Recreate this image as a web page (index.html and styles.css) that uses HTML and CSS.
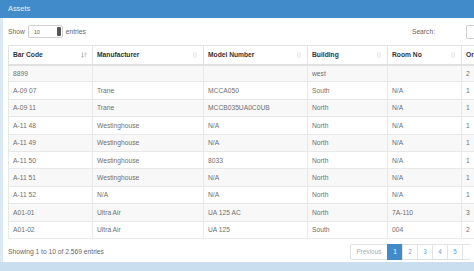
FILE: index.html
```html
<!DOCTYPE html>
<html lang="en">
<head>
    <meta charset="UTF-8">
    <title>Assets</title>
    <link rel="stylesheet" href="styles.css">
</head>
<body>

    <div class="panel">
        <div class="panel-heading">Assets</div>

        <div class="panel-body">
            <!-- length + search controls -->
            <div class="table-controls">
                <label class="length">
                    Show
                    <span class="select">
                        <span class="select-value">10</span>
                        <span class="select-arrow"></span>
                    </span>
                    entries
                </label>
                <label class="search">
                    Search:
                    <span class="search-input"></span>
                </label>
            </div>

            <table class="data-table">
                <colgroup>
                    <col style="width: 84px">
                    <col style="width: 111px">
                    <col style="width: 104px">
                    <col style="width: 80px">
                    <col style="width: 74px">
                    <col style="width: 70px">
                </colgroup>
                <thead>
                    <tr>
                        <th class="sorted">Bar Code
                            <svg class="sort-icon" viewBox="0 0 8 8"><path d="M2 0.5v6.5M0.6 5.4L2 7l1.4-1.6" /><path d="M4.6 1.5h3M4.6 3.5h2.4M4.6 5.5h1.8" /></svg>
                        </th>
                        <th>Manufacturer <svg class="sort-icon" viewBox="0 0 8 8"><path d="M2.5 0.5v7M5.5 0.5v7" /></svg></th>
                        <th>Model Number <svg class="sort-icon" viewBox="0 0 8 8"><path d="M2.5 0.5v7M5.5 0.5v7" /></svg></th>
                        <th>Building <svg class="sort-icon" viewBox="0 0 8 8"><path d="M2.5 0.5v7M5.5 0.5v7" /></svg></th>
                        <th>Room No <svg class="sort-icon" viewBox="0 0 8 8"><path d="M2.5 0.5v7M5.5 0.5v7" /></svg></th>
                        <th>Or</th>
                    </tr>
                </thead>
                <tbody>
                    <tr><td>8899</td><td></td><td></td><td>west</td><td></td><td>2</td></tr>
                    <tr><td>A-09 07</td><td>Trane</td><td>MCCA050</td><td>South</td><td>N/A</td><td>1</td></tr>
                    <tr><td>A-09 11</td><td>Trane</td><td>MCCB035UA0C0UB</td><td>North</td><td>N/A</td><td>1</td></tr>
                    <tr><td>A-11 48</td><td>Westinghouse</td><td>N/A</td><td>North</td><td>N/A</td><td>1</td></tr>
                    <tr><td>A-11 49</td><td>Westinghouse</td><td>N/A</td><td>North</td><td>N/A</td><td>1</td></tr>
                    <tr><td>A-11 50</td><td>Westinghouse</td><td>8033</td><td>North</td><td>N/A</td><td>1</td></tr>
                    <tr><td>A-11 51</td><td>Westinghouse</td><td>N/A</td><td>North</td><td>N/A</td><td>1</td></tr>
                    <tr><td>A-11 52</td><td>N/A</td><td>N/A</td><td>North</td><td>N/A</td><td>1</td></tr>
                    <tr><td>A01-01</td><td>Ultra Air</td><td>UA 125 AC</td><td>North</td><td>7A-110</td><td>3</td></tr>
                    <tr><td>A01-02</td><td>Ultra Air</td><td>UA 125</td><td>South</td><td>004</td><td>2</td></tr>
                </tbody>
            </table>

            <div class="table-footer">
                <div class="info">Showing 1 to 10 of 2,569 entries</div>
                <ul class="pagination">
                    <li class="disabled">Previous</li>
                    <li class="active">1</li>
                    <li>2</li>
                    <li>3</li>
                    <li>4</li>
                    <li>5</li>
                    <li class="gap"></li>
                </ul>
            </div>
        </div>
    </div>

</body>
</html>
```

FILE: styles.css
```css
* {
    margin: 0;
    padding: 0;
    box-sizing: border-box;
}

html, body {
    overflow: hidden;
}

body {
    width: 474px;
    height: 271px;
    background-color: #c9dfef;
    font-family: "Liberation Sans", Arial, sans-serif;
    font-size: 6.7px;
    color: #6f6f6f;
}

.panel {
    width: 600px;
    background-color: #fff;
}

.panel-heading {
    height: 18px;
    line-height: 18px;
    padding-left: 8px;
    background-color: #428bca;
    color: #e8f1fa;
    font-size: 7.4px;
}

.panel-body {
    height: 244px;
    border-left: 3px solid #dbe9f5;
    padding: 0 0 0 5px;
}

/* controls row */
.table-controls {
    display: flex;
    align-items: center;
    height: 26px;
    padding-top: 1px;
    width: 478px;
    justify-content: space-between;
}

.length, .search {
    display: flex;
    align-items: center;
    color: #666;
}

.select {
    display: flex;
    align-items: center;
    justify-content: space-between;
    width: 35px;
    height: 13px;
    margin: 0 3px 0 3px;
    border: 1px solid #cfcfcf;
    border-radius: 2px;
    padding-left: 5px;
    font-size: 5.6px;
}

.select-arrow {
    width: 4px;
    height: 9px;
    margin-right: 1px;
    background-color: #555;
    border-radius: 1px;
}

.search-input {
    display: block;
    width: 20px;
    height: 14px;
    margin-left: 31px;
    border: 1px solid #cfcfcf;
    border-radius: 2px 0 0 2px;
}

/* table */
.data-table {
    table-layout: fixed;
    border-collapse: collapse;
    width: 523px;
    margin-top: 1px;
    border: 1px solid #e3e3e3;
}

.data-table th {
    height: 19px;
    padding: 0 4px;
    text-align: left;
    font-weight: bold;
    color: #333;
    border: 1px solid #e3e3e3;
    border-bottom: 2px solid #e0e0e0;
    position: relative;
    white-space: nowrap;
}

.sort-icon {
    position: absolute;
    right: 5px;
    top: 6px;
    width: 6px;
    height: 6px;
    fill: none;
    stroke: #d6d6d6;
    stroke-width: 1;
}

.sorted .sort-icon {
    stroke: #a9a9a9;
}

.data-table td {
    height: 17.4px;
    padding: 0 4px;
    border: 1px solid #e8e8e8;
    white-space: nowrap;
    overflow: hidden;
}

.data-table tbody tr:nth-child(odd) {
    background-color: #f8f8f8;
}

/* footer */
.table-footer {
    display: flex;
    align-items: center;
    justify-content: space-between;
    width: 462px;
    height: 23px;
    padding-top: 3px;
}

.info {
    color: #666;
}

.pagination {
    display: flex;
    list-style: none;
}

.pagination li {
    height: 16px;
    min-width: 16px;
    line-height: 14px;
    text-align: center;
    border: 1px solid #e2e2e2;
    margin-left: -1px;
    color: #6aa3d6;
    font-size: 6.4px;
}

.pagination li.disabled {
    width: 38px;
    color: #aaa;
    border-radius: 2px 0 0 2px;
}

.pagination li.active {
    background-color: #428bca;
    border-color: #428bca;
    color: #fff;
}

.pagination li.gap {
    min-width: 8px;
    border-right: none;
}
```
